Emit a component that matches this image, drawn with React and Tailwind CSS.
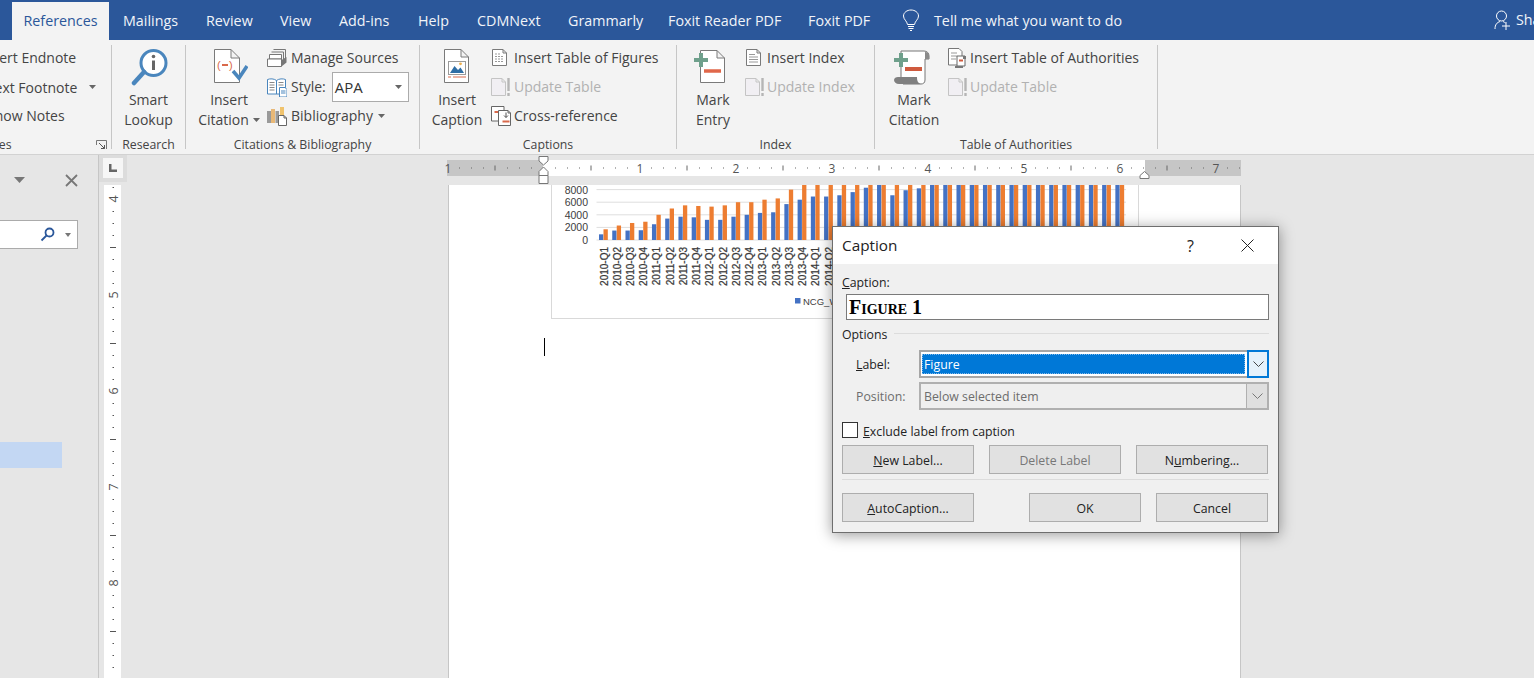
import React from 'react';

const TABS = [
  { name: 'Mailings', width: 'w-[83px]' },
  { name: 'Review', width: 'w-[74px]' },
  { name: 'View', width: 'w-[59px]' },
  { name: 'Add-ins', width: 'w-[79px]' },
  { name: 'Help', width: 'w-[59px]' },
  { name: 'CDMNext', width: 'w-[91px]' },
  { name: 'Grammarly', width: 'w-[100px]' },
  { name: 'Foxit Reader PDF', width: 'w-[140px]' },
  { name: 'Foxit PDF', width: 'w-[94px]' },
];

const FULL = 9000;
const BLUE = [900, 1500, 1500, 1550, 2500, 3400, 3700, 3600, 3200, 3200, 3700, 4000, 4300, 4400, 5700, 6400, 6900, 6900, 7100, 7600, 8300, FULL, 7100, 7900, 8200, ...Array(15).fill(FULL)];
const ORANGE = [1700, 2300, 2700, 2900, 4000, 5000, 5500, 5400, 5300, 5500, 6000, 6000, 6400, 6600, 8000, ...Array(25).fill(FULL)];
const QUARTERS = ['2010-Q1', '2010-Q2', '2010-Q3', '2010-Q4', '2011-Q1', '2011-Q2', '2011-Q3', '2011-Q4', '2012-Q1', '2012-Q2', '2012-Q3', '2012-Q4', '2013-Q1', '2013-Q2', '2013-Q3', '2013-Q4', '2014-Q1', '2014-Q2'];

// ---- ribbon icons ----
const Page = ({ x, y, w, h, fold = 7, stroke = '#7a7a7a', fill = '#fff' }) => (
  <path d={`M${x + .5} ${y + .5}H${x + w - fold}L${x + w - .5} ${y + fold}V${y + h - .5}H${x + .5}ZM${x + w - fold} ${y + .5}V${y + fold}H${x + w - .5}`} fill={fill} stroke={stroke} />
);

const SmartLookupIcon = () => (
  <svg width="38" height="38" viewBox="0 0 38 38" fill="none">
    <circle cx="23.5" cy="15" r="12.5" fill="#fff" stroke="#4a86bd" strokeWidth="3" />
    <circle cx="23.5" cy="8.5" r="1.8" fill="#666" />
    <path d="M23.5 12.5V22" stroke="#666" strokeWidth="3" />
    <path d="M14 24L4 35" stroke="#4a86bd" strokeWidth="4.5" strokeLinecap="round" />
  </svg>
);

const CitationIcon = () => (
  <svg width="38" height="38" viewBox="0 0 38 38" fill="none">
    <Page x={4} y={1} w={26} h={34} fold={9} />
    <text x="7" y="21" fontSize="11" fontFamily="'Liberation Sans',sans-serif" fill="#d9694b">(</text>
    <path d="M12 17H18" stroke="#d9694b" strokeWidth="2" />
    <text x="19" y="21" fontSize="11" fontFamily="'Liberation Sans',sans-serif" fill="#d9694b">)</text>
    <path d="M23 23L29 30L37 18" stroke="#4a86bd" strokeWidth="3.5" />
  </svg>
);

const ManageSourcesIcon = () => (
  <svg width="20" height="20" viewBox="0 0 20 20" fill="none">
    <path d="M6.5 1.5H18.5V11M4.5 4H16.5V13" stroke="#777" />
    <path d="M2.5 6.5H14.5V11H2.5Z" fill="#fff" stroke="#777" />
    <path d="M.5 11H14.5V18.5H.5Z" fill="#fff" stroke="#777" />
    <path d="M14.5 12L19.5 9V14.5L14.5 18.5Z" fill="#777" />
  </svg>
);

const StyleIcon = () => (
  <svg width="20" height="20" viewBox="0 0 20 20" fill="none">
    <path d="M.5 2.5C3 1.5 7 1.5 9.5 3.5C12 1.5 16 1.5 18.5 2.5V11H13V17H.5Z" fill="#fff" stroke="#4a86bd" />
    <path d="M9.5 3.5V17" stroke="#4a86bd" />
    <path d="M2.5 5.5H7.5M2.5 8H7.5M2.5 10.5H7.5M2.5 13H7.5M11.5 5.5H16.5M11.5 8H16.5" stroke="#888" />
    <path d="M12.5 10.5H18L20 12.5V20H12.5Z" fill="#fff" stroke="#4a86bd" />
    <path d="M14 14H18.5M14 16H18.5" stroke="#4a86bd" />
  </svg>
);

const BibliographyIcon = () => (
  <svg width="21" height="21" viewBox="0 0 21 21" fill="none">
    <path d="M0 5H4V17H0Z" fill="#9a9a9a" />
    <path d="M4 3H8V17H4Z" fill="#e8b877" />
    <path d="M8.5 5H12V17H8.5Z" fill="#9a9a9a" />
    <path d="M13 1H17V10H13Z" fill="#f0c36d" />
    <Page x={11} y={9} w={9} h={11} fold={3} stroke="#666" />
  </svg>
);

const InsertCaptionIcon = () => (
  <svg width="28" height="38" viewBox="0 0 28 38" fill="none">
    <Page x={1} y={1} w={25} h={34} fold={8} />
    <rect x="5.5" y="13.5" width="17" height="13" fill="#fff" stroke="#9a9a9a" />
    <path d="M7 25L11.5 18L15 22L17.5 19.5L21 25Z" fill="#2f6ea5" />
    <circle cx="17.5" cy="15.8" r="1.4" fill="#efb04e" />
    <path d="M5 29H8M10 29H23" stroke="#d9694b" />
  </svg>
);

const TableFiguresIcon = () => (
  <svg width="20" height="20" viewBox="0 0 20 20" fill="none">
    <Page x={1} y={1} w={15} h={17} fold={4} />
    <path d="M4 6H9M4 8.5H13M4 11H13M4 13.5H13" stroke="#999" strokeDasharray="2 1" />
  </svg>
);

const UpdateIcon = () => (
  <svg width="20" height="20" viewBox="0 0 20 20" fill="none">
    <Page x={0} y={1} w={15} h={18} fold={4} stroke="#c4c4c4" fill="#f1eff3" />
    <path d="M17.5 1V14" stroke="#b5b5b5" strokeWidth="2.4" />
    <path d="M17.5 16V19" stroke="#b5b5b5" strokeWidth="2.4" />
  </svg>
);

const CrossRefIcon = () => (
  <svg width="20" height="20" viewBox="0 0 20 20" fill="none">
    <path d="M.5.5H13V15H.5Z" fill="#fff" stroke="#666" />
    <path d="M3.5 6H10" stroke="#d9694b" strokeWidth="2" />
    <Page x={7} y={4} w={13} h={16} fold={3} stroke="#666" />
    <path d="M15 6.5V11.5M13 9.5L15 11.5L17 9.5" stroke="#555" />
    <path d="M11.5 15.5H18.5" stroke="#d9694b" strokeWidth="2" />
  </svg>
);

const MarkEntryIcon = () => (
  <svg width="34" height="38" viewBox="0 0 34 38" fill="none">
    <Page x={7} y={2} w={25} h={33} fold={8} />
    <path d="M1 12H15M8 5V19" stroke="#6fa08c" strokeWidth="4" />
    <path d="M11 23H28" stroke="#e0674a" strokeWidth="3.5" />
  </svg>
);

const InsertIndexIcon = () => (
  <svg width="20" height="20" viewBox="0 0 20 20" fill="none">
    <Page x={1} y={1} w={15} h={17} fold={4} />
    <path d="M4 6.5H10M4 9H13M4 11.5H13M4 14H13" stroke="#999" />
  </svg>
);

const MarkCitationIcon = () => (
  <svg width="38" height="38" viewBox="0 0 38 38" fill="none">
    <path d="M8 3H31C34 3 36 5 36 8V11H32V32C32 35 30 36 28 36H10V30H8Z" fill="#fff" stroke="#777" />
    <path d="M32 4C35 4 36 6 36 8V11H32Z" fill="#8a8a8a" />
    <path d="M5 29H24C24 33 25 35 28 36H6C3 36 1 34 1 32C1 30 3 29 5 29Z" fill="#808080" />
    <path d="M1 12H15M8 5V19" stroke="#6fa08c" strokeWidth="4" />
    <path d="M12 21H29" stroke="#cf5a3e" strokeWidth="4" />
  </svg>
);

const TOAIcon = () => (
  <svg width="20" height="21" viewBox="0 0 20 21" fill="none">
    <path d="M.5.5H11L14 3.5V9H10V17H.5Z" fill="#fff" stroke="#777" />
    <path d="M3 5H9M3 8H9M3 11H8" stroke="#999" />
    <path d="M9 8H17V18H9Z" fill="#fff" stroke="#666" />
    <path d="M15 8H18V11H15Z" fill="#777" />
    <path d="M11 12.5H15" stroke="#cf5a3e" strokeWidth="2" />
    <path d="M7 18H15V20H7Z" fill="#777" />
  </svg>
);

const Caret = () => (
  <svg width="7" height="4" viewBox="0 0 7 4" className="shrink-0"><path d="M0 0H7L3.5 4Z" fill="#666" /></svg>
);

const Chevron = ({ color = '#444' }) => (
  <svg width="11" height="6" viewBox="0 0 11 6" fill="none"><path d="M.5.5L5.5 5.5L10.5.5" stroke={color} /></svg>
);

// ---- ribbon pieces ----
function Group({ width, label, children }) {
  return (
    <div className={`${width} h-[104px] mt-[5px] shrink-0 border-r border-[#c6c6c6] flex flex-col`}>
      <div className="flex-1 flex">{children}</div>
      <div className="h-[10px] pt-px leading-[10px] text-[12.3px] text-center text-[#444] whitespace-nowrap">{label}</div>
    </div>
  );
}

function Large({ width, icon, iconShift = '', lines, caret }) {
  return (
    <div className={`${width} flex flex-col items-center shrink-0`}>
      <div className={`h-[45px] pt-[3px] flex items-start justify-center ${iconShift}`}>{icon}</div>
      {lines.map((l, i) => (
        <div key={l} className="h-[20px] leading-[20px] flex items-center gap-[4px] whitespace-nowrap">
          {l}{caret && i === lines.length - 1 && <Caret />}
        </div>
      ))}
    </div>
  );
}

function Small({ icon, label, gap = 'gap-[3px]', disabled, caret }) {
  return (
    <div className={`h-[26px] flex items-center ${gap} whitespace-nowrap ${disabled ? 'text-[#b1b1b1]' : ''}`}>
      {icon}<span className="pb-[2px]">{label}</span>{caret && <span className="ml-[2px]"><Caret /></span>}
    </div>
  );
}

function Ribbon() {
  return (
    <div className="h-[115px] bg-[#f3f3f3] border-b border-[#d2d2d2] flex text-[14px] text-[#444] overflow-hidden">
      <div className="w-[112px] h-[104px] mt-[5px] shrink-0 border-r border-[#c6c6c6] flex flex-col overflow-hidden">
        <div className="flex-1 flex flex-col gap-[3px]">
          <div className="h-[26px] leading-[26px] whitespace-nowrap -ml-[20px]">Insert Endnote</div>
          <div className="h-[26px] flex items-center gap-[12px] whitespace-nowrap -ml-[16px]"><span>Next Footnote</span> <Caret /></div>
          <div className="h-[26px] leading-[26px] whitespace-nowrap -ml-[13px]">Show Notes</div>
        </div>
        <div className="h-[10px] pt-px leading-[10px] text-[12.3px] flex justify-between pr-[4px] whitespace-nowrap">
          <span className="-ml-[46px]">Footnotes</span>
          <svg width="11" height="11" viewBox="0 0 11 11" fill="none"><path d="M.5 5V.5H10.5V10.5H6" stroke="#777" /><path d="M3 3L8.5 8.5M5 8.5H8.5V5" stroke="#555" /></svg>
        </div>
      </div>
      <Group width="w-[74px]" label="Research">
        <Large width="w-[73px]" icon={<SmartLookupIcon />} lines={['Smart', 'Lookup']} />
      </Group>
      <Group width="w-[234px]" label="Citations & Bibliography">
        <div className="pl-[8px]"><Large width="w-[70px]" icon={<CitationIcon />} lines={['Insert', 'Citation']} caret /></div>
        <div className="ml-[3px] flex flex-col gap-[3px]">
          <Small icon={<ManageSourcesIcon />} label="Manage Sources" gap="gap-[4px]" />
          <div className="h-[26px] flex items-center gap-[4px]">
            <StyleIcon />
            <span className="pb-[2px]">Style:</span>
            <div className="w-[77px] h-[30px] ml-[2px] bg-white border border-[#ababab] flex items-center justify-between pl-[2px] pr-[6px] text-[15px] text-[#333]">APA <Caret /></div>
          </div>
          <Small icon={<BibliographyIcon />} label="Bibliography" gap="gap-[3px]" caret />
        </div>
      </Group>
      <Group width="w-[257px]" label="Captions">
        <div className="pl-[8px]"><Large width="w-[58px]" icon={<InsertCaptionIcon />} lines={['Insert', 'Caption']} /></div>
        <div className="ml-[5px] flex flex-col gap-[3px]">
          <Small icon={<TableFiguresIcon />} label="Insert Table of Figures" />
          <Small icon={<UpdateIcon />} label="Update Table" disabled />
          <Small icon={<CrossRefIcon />} label="Cross-reference" />
        </div>
      </Group>
      <Group width="w-[198px]" label="Index">
        <div className="pl-[8px]"><Large width="w-[56px]" iconShift="-ml-[6px]" icon={<MarkEntryIcon />} lines={['Mark', 'Entry']} /></div>
        <div className="ml-[4px] flex flex-col gap-[3px]">
          <Small icon={<InsertIndexIcon />} label="Insert Index" gap="gap-[2px]" />
          <Small icon={<UpdateIcon />} label="Update Index" gap="gap-[2px]" disabled />
        </div>
      </Group>
      <Group width="w-[283px]" label="Table of Authorities">
        <div className="pl-[8px]"><Large width="w-[62px]" iconShift="-ml-[4px]" icon={<MarkCitationIcon />} lines={['Mark', 'Citation']} /></div>
        <div className="ml-[3px] flex flex-col gap-[3px]">
          <Small icon={<TOAIcon />} label="Insert Table of Authorities" gap="gap-[2px]" />
          <Small icon={<UpdateIcon />} label="Update Table" gap="gap-[2px]" disabled />
        </div>
      </Group>
    </div>
  );
}

function TopBar() {
  return (
    <div className="h-[40px] bg-[#2b579a] flex items-end text-[14.3px] text-[#f1f4f9] overflow-hidden whitespace-nowrap">
      <div className="ml-[12px] mr-[14px] w-[97px] shrink-0 h-[38px] pb-[1px] bg-[#f3f3f3] text-[#2b579a] flex items-center justify-center">References</div>
      {TABS.map(t => (
        <div key={t.name} className={`${t.width} shrink-0 h-[38px] pb-[1px] flex items-center`}>{t.name}</div>
      ))}
      <div className="w-[32px] shrink-0 h-[40px] flex items-center">
        <svg width="18" height="22" viewBox="0 0 18 22" fill="none" stroke="#fff">
          <path d="M5.5 15.5C5 12 1.5 10.5 1.5 7C1.5 3.5 5 1 9 1C13 1 16.5 3.5 16.5 7C16.5 10.5 13 12 12.5 15.5Z" />
          <path d="M6 17.5H12M6.5 19.5H11.5M8 21.5H10" />
        </svg>
      </div>
      <div className="w-[560px] shrink-0 h-[38px] pb-[1px] flex items-center">Tell me what you want to do</div>
      <div className="shrink-0 h-[40px] flex items-center gap-[5px]">
        <svg width="17" height="20" viewBox="0 0 17 20" fill="none" stroke="#fff">
          <circle cx="7.5" cy="6" r="5" />
          <path d="M1 19C1 14.5 3 12.5 6 11.5M9 11.5C10 12 11 12.5 11.5 13M12 12V20M8 16H16" />
        </svg>
        <span>Share</span>
      </div>
    </div>
  );
}

// ---- rulers ----
function HRuler() {
  const marks = [];
  for (let x = 0; x <= 793; x += 12) {
    if (x % 96 === 0) continue;
    marks.push(x % 48 === 0
      ? <path key={x} d={`M${x} 5.5V10.5`} stroke="#666" />
      : <rect key={x} x={x} y="7.5" width="1" height="1" fill="#666" />);
  }
  return (
    <svg width="794" height="30" viewBox="0 0 794 30" className="shrink-0 overflow-visible">
      <rect x="0" y="0" width="96" height="16" fill="#c6c6c6" />
      <rect x="96" y="0" width="602" height="16" fill="#fff" />
      <rect x="698" y="0" width="96" height="16" fill="#c6c6c6" />
      {marks}
      {[[1, 0], [1, 192], [2, 288], [3, 384], [4, 480], [5, 576], [6, 672], [7, 768]].map(([n, x]) => (
        <text key={x} x={x + 1} y="13" textAnchor="middle" fontSize="12" fontFamily="'Open Sans',sans-serif" fill="#555">{n}</text>
      ))}
      <path d="M92 -3.5H101V1L96.5 5L92 1ZM96.5 7L101 11.5V15.5H92V11.5Z" fill="#fff" stroke="#777" />
      <path d="M92 15.5H101V23.5H92Z" fill="#fff" stroke="#777" />
      <path d="M697.5 11.5L702 15.5V18.5H693V15.5Z" fill="#fff" stroke="#777" />
    </svg>
  );
}

function VRuler() {
  const marks = [];
  for (let y = 2; y < 494; y += 12) {
    const rel = y - 14;
    if (rel % 96 === 0) continue;
    marks.push(rel % 48 === 0
      ? <path key={y} d={`M6 ${y + .5}H12`} stroke="#555" />
      : <rect key={y} x="8.5" y={y} width="1.5" height="1" fill="#555" />);
  }
  return (
    <svg width="17" height="494" viewBox="0 0 17 494">
      <rect width="17" height="494" fill="#fff" />
      {marks}
      {[[4, 14], [5, 110], [6, 206], [7, 302], [8, 398]].map(([n, y]) => (
        <text key={n} x="9" y={y} transform={`rotate(-90 9 ${y})`} textAnchor="middle" dominantBaseline="central" fontSize="12.5" fontFamily="'Open Sans',sans-serif" fill="#555">{n}</text>
      ))}
    </svg>
  );
}

// ---- chart in the page ----
function Chart() {
  const y = v => 240 - v * 12.6 / 2000;
  return (
    <svg width="587" height="133" viewBox="551 185 587 133" className="block">
      {[0, 2000, 4000, 6000, 8000].map(v => (
        <g key={v}>
          <path d={`M595.5 ${y(v)}H1125`} stroke="#dedede" />
          <text x="587" y={y(v) + 4} textAnchor="end" fontSize="10.5" fontFamily="'Liberation Sans',sans-serif" fill="#404040">{v}</text>
        </g>
      ))}
      {BLUE.map((v, i) => {
        const x = 598 + i * 13.24;
        return (
          <g key={i}>
            <rect x={x} y={y(v)} width="4.3" height={240 - y(v)} fill="#4472c4" />
            <rect x={x + 4.5} y={y(ORANGE[i])} width="4.3" height={240 - y(ORANGE[i])} fill="#ed7d31" />
          </g>
        );
      })}
      {QUARTERS.map((q, i) => (
        <text key={q} x="0" y="0" transform={`translate(${606.5 + i * 13.24} 247) rotate(-90)`} textAnchor="end" fontSize="10" stroke="#444" strokeWidth=".25" fontFamily="'Liberation Sans',sans-serif" fill="#333">{q}</text>
      ))}
      <rect x="794" y="298" width="5.5" height="5.5" fill="#4472c4" />
      <text x="802" y="305" fontSize="9.5" fontFamily="'Liberation Sans',sans-serif" fill="#404040">NCG_WTI</text>
    </svg>
  );
}

// ---- the Caption dialog ----
function DlgButton({ width, children, disabled }) {
  return (
    <div className={`${width} h-[29px] pt-[3px] bg-[#e1e1e1] border border-[#adadad] flex items-center justify-center ${disabled ? 'text-[#777]' : ''}`}>{children}</div>
  );
}

function CaptionDialog() {
  return (
    <div className="absolute left-[832px] top-[226px] w-[447px] h-[307px] border border-[#6e6e6e] bg-[#f0f0f0] shadow-[0_2px_14px_rgba(0,0,0,0.4)] flex flex-col text-[12.3px] text-[#222]">
      <div className="h-[37px] bg-white flex items-center pl-[9px] text-[15.3px] text-[#222] shrink-0">
        <span className="w-[57px]">Caption</span>
        <span className="ml-[288px] w-[8px] text-[16px]">?</span>
        <svg className="ml-[46px]" width="13" height="13" viewBox="0 0 13 13" fill="none" stroke="#222"><path d="M.5.5L12.5 12.5M12.5.5L.5 12.5" /></svg>
      </div>
      <div className="pl-[9px] pr-[9px] flex flex-col">
        <div className="mt-[11px] h-[16px] leading-[16px]"><span className="underline">C</span>aption:</div>
        <div className="mt-[3px] ml-[4px] h-[26px] bg-white border border-[#7a7a7a] pl-[2px] flex items-center font-['Liberation_Serif',serif] font-bold text-[20px] [font-variant:small-caps] text-black">Figure 1</div>
        <div className="mt-[6px] h-[16px] pt-px leading-[16px] flex items-center gap-[7px]">Options<div className="flex-1 h-px bg-[#dcdcdc] -mt-[3px]" /></div>
        <div className="mt-[8px] h-[28px] flex items-center">
          <div className="w-[77px] pt-[2px] pl-[14px]"><span className="underline">L</span>abel:</div>
          <div className="w-[350px] h-[28px] bg-white border-2 border-[#a6a6a6] flex">
            <div className="flex-1 my-[2px] ml-px mr-[2px] pt-[2px] bg-[#0078d7] text-white outline-1 -outline-offset-1 outline-dotted outline-[#7fb7e8] flex items-center pl-[2px]">Figure</div>
            <div className="w-[22px] -my-[2px] -mr-[2px] bg-[#e5f1fb] border-2 border-[#0078d7] flex items-center justify-center"><Chevron /></div>
          </div>
        </div>
        <div className="mt-[4px] h-[28px] flex items-center text-[#6d6d6d]">
          <div className="w-[77px] pt-[2px] pl-[14px]">Position:</div>
          <div className="w-[350px] h-[28px] bg-[#efefef] border-2 border-[#b0b0b0] flex">
            <div className="flex-1 pt-[2px] flex items-center pl-[3px]">Below selected item</div>
            <div className="w-[21px] bg-[#dfdfdf] border-l border-[#b0b0b0] flex items-center justify-center"><Chevron color="#777" /></div>
          </div>
        </div>
        <div className="mt-[12px] h-[16px] flex items-center gap-[5px]">
          <div className="w-[16px] h-[16px] bg-white border border-[#333]" />
          <div className="pt-[5px]"><span className="underline">E</span>xclude label from caption</div>
        </div>
        <div className="mt-[7px] flex gap-[15px]">
          <DlgButton width="w-[132px]"><span><span className="underline">N</span>ew Label...</span></DlgButton>
          <DlgButton width="w-[132px]" disabled>Delete Label</DlgButton>
          <DlgButton width="w-[132px]"><span>N<span className="underline">u</span>mbering...</span></DlgButton>
        </div>
        <div className="mt-[5px] h-px bg-[#dcdcdc]" />
        <div className="mt-[13px] flex">
          <DlgButton width="w-[132px]"><span><span className="underline">A</span>utoCaption...</span></DlgButton>
          <div className="ml-[55px]"><DlgButton width="w-[112px]">OK</DlgButton></div>
          <div className="ml-[15px]"><DlgButton width="w-[112px]">Cancel</DlgButton></div>
        </div>
      </div>
    </div>
  );
}

export default function App() {
  return (
    <div className="relative w-[1534px] h-[678px] overflow-hidden bg-[#e6e6e6] font-['Open_Sans','Noto_Sans',sans-serif]">
      <TopBar />
      <Ribbon />
      <div className="h-[523px] flex">
        {/* navigation pane */}
        <div className="w-[99px] shrink-0 border-r border-[#c6c6c6] flex flex-col">
          <div className="h-[27px] pt-[9px] flex items-start">
            <svg className="ml-[14px] mt-[13px]" width="11" height="6" viewBox="0 0 11 6"><path d="M0 0H11L5.5 6Z" fill="#777" /></svg>
            <svg className="ml-[40px] mt-[10px]" width="13" height="13" viewBox="0 0 13 13" fill="none" stroke="#777" strokeWidth="1.8"><path d="M1 1L12 12M12 1L1 12" /></svg>
          </div>
          <div className="mt-[38px] w-[78px] h-[29px] bg-white border border-[#ababab] border-l-0 flex items-center justify-end pr-[6px] gap-[9px]">
            <svg className="mr-[1px]" width="15" height="15" viewBox="0 0 15 15" fill="none" stroke="#2b579a" strokeWidth="1.8"><circle cx="9.5" cy="5.5" r="4" /><path d="M6.5 8.5L1.5 13.5" /></svg>
            <svg width="6" height="4" viewBox="0 0 6 4"><path d="M0 0H6L3 4Z" fill="#777" /></svg>
          </div>
          <div className="mt-[193px] w-[62px] h-[26px] bg-[#c3d7f3]" />
        </div>
        {/* vertical ruler */}
        <div className="w-[28px] shrink-0 flex flex-col">
          <div className="h-[27px] bg-[#dcdcdc] px-[4px] pt-[3px] pb-[4px]">
            <div className="h-[20px] bg-[#f6f6f6] flex items-center justify-center">
              <svg width="8" height="8" viewBox="0 0 8 8"><path d="M0 0H2.5V5.5H8V8H0Z" fill="#666" /></svg>
            </div>
          </div>
          <div className="mt-[3px] ml-[5px] w-[17px]"><VRuler /></div>
        </div>
        {/* document */}
        <div className="flex-1 min-w-0 flex flex-col pl-[320px]">
          <div className="h-[30px] pt-[5px]"><HRuler /></div>
          <div className="ml-[1px] w-[793px] flex-1 bg-white border-x border-[#c6c6c6]">
            <div className="ml-[102px] w-[588px] h-[134px] border-x border-b border-[#d9d9d9]"><Chart /></div>
            <div className="ml-[95px] mt-[19px] w-px h-[18px] bg-black" />
          </div>
        </div>
      </div>
      <CaptionDialog />
    </div>
  );
}
